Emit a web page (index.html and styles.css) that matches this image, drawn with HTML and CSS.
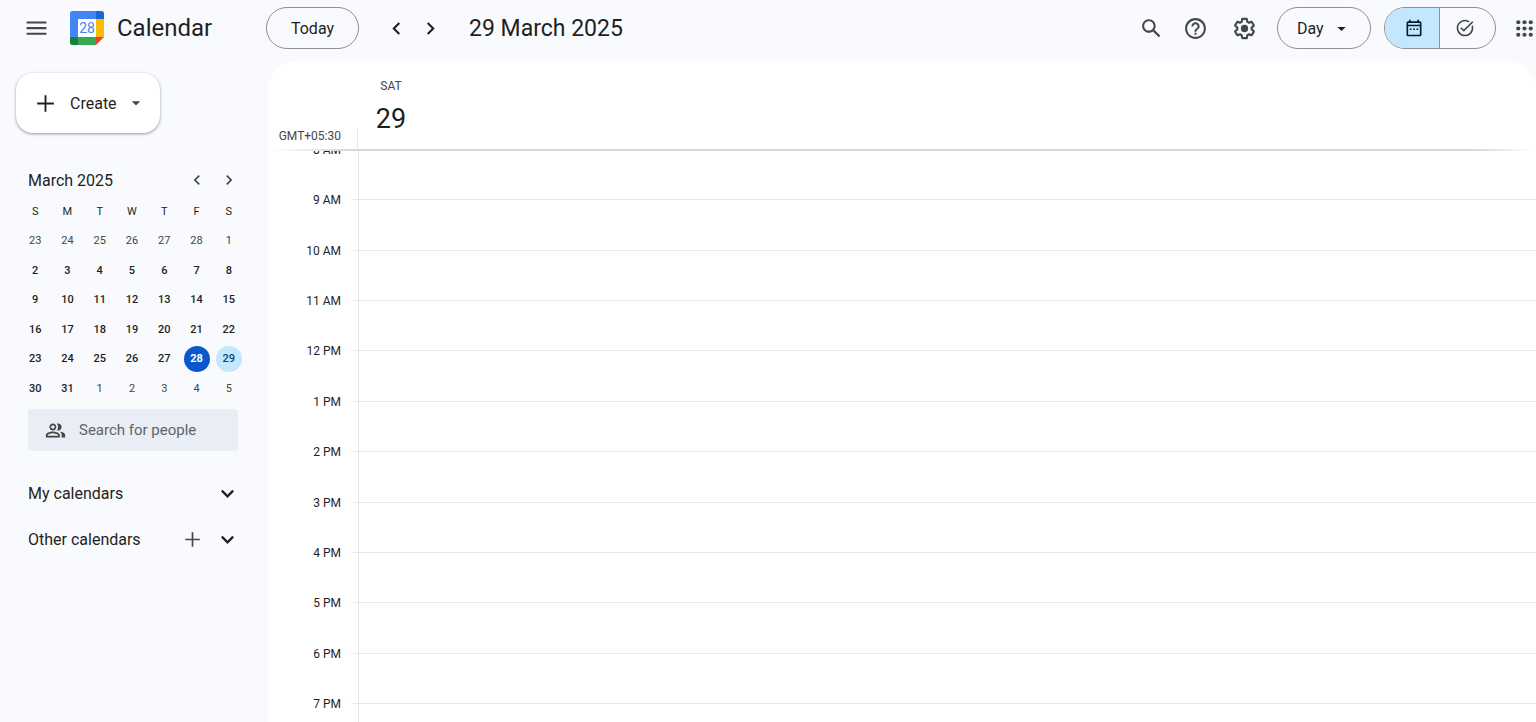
FILE: index.html
```html
<!DOCTYPE html>
<html lang="en-GB">
<head>
<meta charset="utf-8">
<meta name="viewport" content="width=device-width, initial-scale=1">
<title>Calendar - 29 March 2025</title>
<link rel="stylesheet" href="styles.css">
</head>
<body>
<div class="app">
  <header class="topbar">
    <div class="brand">
      <button class="icon-btn menu-btn" type="button" aria-label="Main menu">
        <svg class="icon" viewBox="0 0 24 24"><path d="M2.500 5.200h19v2h-19zM2.500 10.600h19v2h-19zM2.500 16h19v2h-19z"/></svg>
      </button>
      <svg class="logo" viewBox="0 0 34 34" aria-hidden="true">
        <path fill="#4285f4" d="M2.500 0H26v8H8v18H0V2.500A2.500 2.500 0 0 1 2.500 0z"/>
        <path fill="#fff" d="M8 8h18v18H8z"/>
        <path fill="#1967d2" d="M26 0h5.500A2.500 2.500 0 0 1 34 2.500V8h-8z"/>
        <path fill="#fbbc04" d="M26 8h8v18h-8z"/>
        <path fill="#34a853" d="M8 26h18v8H8z"/>
        <path fill="#188038" d="M0 26h8v8H2.500A2.500 2.500 0 0 1 0 31.500z"/>
        <path fill="#ea4335" d="M26 26h8l-8 8z"/>
        <text class="logo-day" x="17" y="22" text-anchor="middle">28</text>
      </svg>
      <span class="brand-name">Calendar</span>
    </div>
    <button class="pill today" type="button">Today</button>
    <div class="stepper">
      <button class="icon-btn" type="button" aria-label="Previous day">
        <svg class="icon" viewBox="0 0 24 24"><path d="M15.400 7.400 14 6l-6 6 6 6 1.400-1.400L10.800 12z"/></svg>
      </button>
      <button class="icon-btn" type="button" aria-label="Next day">
        <svg class="icon" viewBox="0 0 24 24"><path d="M10 6 8.600 7.400l4.600 4.600-4.600 4.600L10 18l6-6z"/></svg>
      </button>
    </div>
    <h1 class="date-title">29 March 2025</h1>
    <div class="tools">
      <button class="icon-btn search-btn" type="button" aria-label="Search">
        <svg class="icon" viewBox="0 0 24 24"><path d="M20.490 19l-5.730-5.730C15.530 12.200 16 10.910 16 9.500 16 5.910 13.090 3 9.500 3S3 5.910 3 9.500 5.910 16 9.500 16c1.410 0 2.700-.47 3.770-1.240L19 20.490 20.490 19zM5 9.500C5 7.010 7.010 5 9.500 5S14 7.010 14 9.500 11.990 14 9.500 14 5 11.990 5 9.500z"/></svg>
      </button>
      <button class="icon-btn help-btn" type="button" aria-label="Support">
        <svg class="icon" viewBox="0 0 24 24"><path d="M11 18h2v-2h-2v2zm1-16C6.480 2 2 6.480 2 12s4.480 10 10 10 10-4.480 10-10S17.520 2 12 2zm0 18c-4.410 0-8-3.590-8-8s3.590-8 8-8 8 3.590 8 8-3.590 8-8 8zm0-14c-2.210 0-4 1.790-4 4h2c0-1.100.9-2 2-2s2 .9 2 2c0 2-3 1.750-3 5h2c0-2.250 3-2.500 3-5 0-2.210-1.790-4-4-4z"/></svg>
      </button>
      <button class="icon-btn" type="button" aria-label="Settings">
        <svg class="icon" viewBox="0 0 24 24"><path d="M13.850 22.250h-3.700c-.74 0-1.360-.54-1.450-1.270l-.27-1.890c-.27-.14-.53-.29-.79-.46l-1.800.72c-.7.26-1.470-.03-1.810-.65L2.200 15.530c-.35-.66-.2-1.440.36-1.880l1.530-1.190c-.01-.15-.02-.3-.02-.46 0-.15.010-.31.020-.46l-1.520-1.190c-.59-.45-.74-1.260-.37-1.880l1.850-3.190c.34-.62 1.110-.9 1.790-.63l1.810.73c.26-.17.52-.32.780-.46l.27-1.910c.09-.7.710-1.250 1.440-1.250h3.700c.74 0 1.360.54 1.450 1.270l.27 1.890c.27.14.53.29.79.46l1.800-.72c.71-.26 1.480.03 1.820.65l1.840 3.180c.36.66.2 1.440-.36 1.880l-1.520 1.190c.01.15.020.3.020.46s-.01.31-.02.46l1.520 1.190c.56.45.72 1.230.37 1.860l-1.860 3.220c-.34.62-1.110.9-1.800.63l-1.800-.72c-.26.17-.52.32-.78.46l-.27 1.910c-.1.680-.72 1.220-1.460 1.220zm-3.230-2h2.760l.37-2.550.53-.22c.44-.18.88-.44 1.340-.78l.45-.34 2.380.96 1.380-2.400-2.030-1.580.07-.56c.03-.26.06-.51.06-.78s-.03-.53-.06-.78l-.07-.56 2.030-1.580-1.390-2.400-2.390.96-.45-.35c-.42-.32-.87-.58-1.330-.77l-.52-.22-.37-2.550h-2.760l-.37 2.550-.53.210c-.44.19-.88.440-1.340.79l-.45.33-2.380-.95-1.390 2.390 2.030 1.580-.07.56a7 7 0 0 0-.06.79c0 .26.020.53.060.78l.07.56-2.030 1.580 1.380 2.400 2.390-.96.45.35c.43.33.86.58 1.330.77l.53.22.38 2.550z"/><circle cx="12" cy="12" r="3.500"/></svg>
      </button>
      <label class="pill view-picker">
        <select class="view-select" aria-label="View">
          <option>Day</option><option>Week</option><option>Month</option><option>Year</option>
        </select>
        <svg class="icon view-caret" viewBox="0 0 24 24"><path d="m8 10.500 4 4 4-4z"/></svg>
      </label>
      <div class="pill switcher">
        <button class="switch active" type="button" aria-label="Calendar" aria-pressed="true">
          <svg class="icon-sm" viewBox="0 0 24 24"><path d="M19 4h-1V2h-2v2H8V2H6v2H5a2 2 0 0 0-2 2v14c0 1.100.9 2 2 2h14a2 2 0 0 0 2-2V6a2 2 0 0 0-2-2zm0 16H5V10h14v10zm0-12H5V6h14v2z"/><path d="M7 12.500h2v2H7zM11 12.500h2v2h-2zM15 12.500h2v2h-2z"/></svg>
        </button>
        <button class="switch" type="button" aria-label="Tasks" aria-pressed="false">
          <svg class="icon-sm" viewBox="0 0 24 24"><path d="M22 5.180 10.590 16.600l-4.240-4.240 1.410-1.410 2.830 2.830 10-10L22 5.180zM19.790 10.220c.13.570.21 1.170.21 1.780 0 4.420-3.580 8-8 8s-8-3.580-8-8 3.580-8 8-8c1.580 0 3.040.46 4.280 1.250l1.440-1.440A9.900 9.900 0 0 0 12 2C6.480 2 2 6.480 2 12s4.480 10 10 10 10-4.480 10-10c0-1.190-.22-2.330-.6-3.390l-1.610 1.610z"/></svg>
        </button>
      </div>
      <button class="icon-btn apps-btn" type="button" aria-label="Apps">
        <svg class="icon" viewBox="0 0 24 24"><circle cx="6" cy="6" r="2"/><circle cx="12" cy="6" r="2"/><circle cx="18" cy="6" r="2"/><circle cx="6" cy="12" r="2"/><circle cx="12" cy="12" r="2"/><circle cx="18" cy="12" r="2"/><circle cx="6" cy="18" r="2"/><circle cx="12" cy="18" r="2"/><circle cx="18" cy="18" r="2"/></svg>
      </button>
    </div>
  </header>

  <aside class="sidebar">
    <button class="create" type="button">
      <svg class="icon" viewBox="0 0 24 24"><path d="M11.100 4h1.800v7.100H20v1.800h-7.100V20h-1.800v-7.100H4v-1.800h7.100z"/></svg>
      <span>Create</span>
      <svg class="icon-sm create-caret" viewBox="0 0 24 24"><path d="m7 10 5 5 5-5z"/></svg>
    </button>

    <section class="mini">
      <div class="mini-head">
        <h2 class="side-title">March 2025</h2>
        <button class="mini-btn" type="button" aria-label="Previous month">
          <svg class="icon-sm" viewBox="0 0 24 24"><path d="M15.400 7.400 14 6l-6 6 6 6 1.400-1.400L10.800 12z"/></svg>
        </button>
        <button class="mini-btn" type="button" aria-label="Next month">
          <svg class="icon-sm" viewBox="0 0 24 24"><path d="M10 6 8.600 7.400l4.600 4.600-4.600 4.600L10 18l6-6z"/></svg>
        </button>
      </div>
      <table class="month">
        <thead>
          <tr><th>S</th><th>M</th><th>T</th><th>W</th><th>T</th><th>F</th><th>S</th></tr>
        </thead>
        <tbody>
          <tr class="outside"><td><button>23</button></td><td><button>24</button></td><td><button>25</button></td><td><button>26</button></td><td><button>27</button></td><td><button>28</button></td><td><button>1</button></td></tr>
          <tr><td><button>2</button></td><td><button>3</button></td><td><button>4</button></td><td><button>5</button></td><td><button>6</button></td><td><button>7</button></td><td><button>8</button></td></tr>
          <tr><td><button>9</button></td><td><button>10</button></td><td><button>11</button></td><td><button>12</button></td><td><button>13</button></td><td><button>14</button></td><td><button>15</button></td></tr>
          <tr><td><button>16</button></td><td><button>17</button></td><td><button>18</button></td><td><button>19</button></td><td><button>20</button></td><td><button>21</button></td><td><button>22</button></td></tr>
          <tr><td><button>23</button></td><td><button>24</button></td><td><button>25</button></td><td><button>26</button></td><td><button>27</button></td><td><button class="is-today">28</button></td><td><button class="is-selected">29</button></td></tr>
          <tr><td><button>30</button></td><td><button>31</button></td><td class="outside"><button>1</button></td><td class="outside"><button>2</button></td><td class="outside"><button>3</button></td><td class="outside"><button>4</button></td><td class="outside"><button>5</button></td></tr>
        </tbody>
      </table>
    </section>

    <label class="people">
      <svg class="icon-people" viewBox="0 0 24 24"><path d="M9 12c2.210 0 4-1.790 4-4s-1.790-4-4-4-4 1.790-4 4 1.790 4 4 4zm0-6c1.100 0 2 .9 2 2s-.9 2-2 2-2-.9-2-2 .9-2 2-2zM9 13c-2.670 0-8 1.340-8 4v3h16v-3c0-2.660-5.330-4-8-4zm6 5H3v-.99C3.200 16.290 6.300 15 9 15s5.800 1.290 6 2v1zM15 12c2.210 0 4-1.790 4-4s-1.790-4-4-4c-.47 0-.91.100-1.330.24A5.980 5.980 0 0 1 15 8c0 1.430-.5 2.740-1.330 3.760.42.140.86.240 1.330.24zM16.670 13.130C18.040 14.060 19 15.320 19 17v3h4v-3c0-2.180-3.580-3.470-6.330-3.870z"/></svg>
      <input class="people-input" type="text" placeholder="Search for people" aria-label="Search for people">
    </label>

    <div class="list-head">
      <h2 class="side-title">My calendars</h2>
      <button class="mini-btn" type="button" aria-label="Expand my calendars">
        <svg class="icon" viewBox="0 0 24 24"><path d="M12 16.300 5.800 10.100l1.600-1.600 4.600 4.600 4.600-4.600 1.600 1.600z"/></svg>
      </button>
    </div>
    <div class="list-head">
      <h2 class="side-title">Other calendars</h2>
      <button class="mini-btn add-btn" type="button" aria-label="Add other calendars">
        <svg class="icon" viewBox="0 0 24 24"><path d="M11.200 5h1.600v6.200H19v1.600h-6.200V19h-1.600v-6.200H5v-1.600h6.200z"/></svg>
      </button>
      <button class="mini-btn" type="button" aria-label="Expand other calendars">
        <svg class="icon" viewBox="0 0 24 24"><path d="M12 16.300 5.800 10.100l1.600-1.600 4.600 4.600 4.600-4.600 1.600 1.600z"/></svg>
      </button>
    </div>
  </aside>

  <main class="day-view">
    <div class="day-head">
      <span class="zone">GMT+05:30</span>
      <span class="zone-rule"></span>
      <div class="day-name">
        <span class="weekday">SAT</span>
        <span class="day-number">29</span>
      </div>
    </div>
    <ol class="hours">
      <li class="hour"><span class="time">8 AM</span><span class="slot"></span></li>
      <li class="hour"><span class="time">9 AM</span><span class="slot"></span></li>
      <li class="hour"><span class="time">10 AM</span><span class="slot"></span></li>
      <li class="hour"><span class="time">11 AM</span><span class="slot"></span></li>
      <li class="hour"><span class="time">12 PM</span><span class="slot"></span></li>
      <li class="hour"><span class="time">1 PM</span><span class="slot"></span></li>
      <li class="hour"><span class="time">2 PM</span><span class="slot"></span></li>
      <li class="hour"><span class="time">3 PM</span><span class="slot"></span></li>
      <li class="hour"><span class="time">4 PM</span><span class="slot"></span></li>
      <li class="hour"><span class="time">5 PM</span><span class="slot"></span></li>
      <li class="hour"><span class="time">6 PM</span><span class="slot"></span></li>
      <li class="hour"><span class="time">7 PM</span><span class="slot"></span></li>
    </ol>
  </main>
</div>
</body>
</html>
```
FILE: styles.css
```css
* {
  box-sizing: border-box;
}

body {
  margin: 0;
  background: #f8fafd;
  color: #1f1f1f;
  font-family: Roboto, "Liberation Sans", sans-serif;
  font-size: 16px;
  overflow: hidden;
}

h1,
h2 {
  margin: 0;
  font-weight: 400;
}

button {
  margin: 0;
  padding: 0;
  border: 0;
  background: none;
  color: inherit;
  font: inherit;
  cursor: pointer;
}

svg {
  display: block;
  flex: none;
  fill: currentColor;
}

.icon {
  width: 25px;
  height: 25px;
}

.icon-sm {
  width: 20px;
  height: 20px;
}

.app {
  display: grid;
  grid-template-columns: 268px 1fr;
  grid-template-rows: auto 1fr;
  min-height: 100vh;
}

/* Top bar */

.topbar {
  grid-column: 1 / -1;
  display: flex;
  align-items: center;
  padding: 7px 0 12px;
}

.brand {
  display: flex;
  align-items: center;
  width: 266px;
  padding-left: 24px;
}

.icon-btn {
  display: grid;
  place-items: center;
  color: #444746;
}

.menu-btn {
  margin-right: 21px;
}

.logo {
  width: 34px;
  height: 34px;
  margin-right: 13px;
}

.logo-day {
  fill: #4285f4;
  font-size: 14px;
}

.brand-name {
  font-size: 24px;
}

.pill {
  height: 42px;
  border: 1px solid #8e918f;
  border-radius: 21px;
}

.today {
  width: 93px;
}

.stepper {
  display: flex;
  gap: 9px;
  margin: 0 26px 0 25px;
}

.stepper .icon-btn {
  color: #1f1f1f;
}

.date-title {
  font-size: 23px;
}

.tools {
  display: flex;
  align-items: center;
  margin-left: auto;
  margin-right: -1px;
}

.tools > .icon-btn {
  margin-right: 20px;
}

.tools > .search-btn {
  margin-right: 19px;
}

.tools > .help-btn {
  margin-right: 24px;
}

.view-picker {
  display: grid;
  align-items: center;
  width: 94px;
  margin-right: 13px;
}

.view-select {
  grid-area: 1 / 1;
  width: 100%;
  height: 40px;
  padding: 0 0 0 19px;
  appearance: none;
  border: 0;
  border-radius: 20px;
  background: none;
  color: inherit;
  font: inherit;
}

.view-caret {
  grid-area: 1 / 1;
  justify-self: end;
  margin-right: 16px;
  pointer-events: none;
}

.switcher {
  display: flex;
  width: 112px;
  margin-right: 16px;
  overflow: hidden;
}

.switch {
  flex: 1;
  display: grid;
  place-items: center;
  padding-right: 5px;
  color: #444746;
}

.switch.active {
  padding: 0 0 0 4px;
  border-right: 1px solid #8e918f;
  background: #c2e7ff;
  color: #001d35;
}

.tools > .apps-btn {
  margin-right: 0;
}

/* Sidebar */

.sidebar {
  padding: 12px 30px 24px 16px;
}

.create {
  display: flex;
  align-items: center;
  width: 144px;
  height: 60px;
  padding-left: 17px;
  border-radius: 17px;
  background: #fff;
  box-shadow: 0 1px 2px rgba(60, 64, 67, 0.35), 0 1px 3px 1px rgba(60, 64, 67, 0.15);
}

.create span {
  margin: 0 9px 0 12px;
}

.create-caret {
  color: #444746;
}

.side-title {
  margin-right: auto;
  font-size: 16px;
}

.mini-head {
  display: flex;
  align-items: center;
  height: 32px;
  margin: 31px -3px 0 0;
  padding-left: 12px;
  gap: 7px;
}

.mini-btn {
  display: grid;
  place-items: center;
  width: 25px;
  height: 25px;
}

.mini-head .mini-btn {
  color: #444746;
}

.month {
  table-layout: fixed;
  width: 226px;
  height: 206px;
  margin: 1px 0 6px 3px;
  border-collapse: collapse;
  font-size: 11px;
  font-weight: 500;
}

.month th,
.month td {
  height: 29px;
  padding: 0;
  text-align: center;
  vertical-align: middle;
  font-weight: inherit;
}

.month th {
  font-weight: 400;
}

.month button {
  display: block;
  width: 26px;
  height: 26px;
  margin: 0 auto;
  border-radius: 50%;
}

.month .outside {
  color: #444746;
  font-weight: 400;
}

.month .is-today {
  background: #0b57d0;
  color: #fff;
  font-weight: 700;
}

.month .is-selected {
  background: #c2e7ff;
  color: #004a77;
}

.people {
  display: flex;
  align-items: center;
  height: 42px;
  margin: 0 0 19px 12px;
  padding-left: 17px;
  gap: 13px;
  border-radius: 4px;
  background: #e9eef6;
  color: #444746;
}

.icon-people {
  width: 21px;
  height: 21px;
}

.people-input {
  flex: 1;
  min-width: 0;
  padding: 0;
  border: 0;
  outline: 0;
  background: none;
  color: inherit;
  font: inherit;
  font-size: 15px;
}

.people-input::placeholder {
  color: #5f6368;
  opacity: 1;
}

.list-head {
  display: flex;
  align-items: center;
  height: 46px;
  padding-left: 12px;
}

.list-head .mini-btn {
  margin-right: -2px;
}

.list-head .add-btn {
  margin-right: 10px;
  color: #444746;
}

/* Day view */

.day-view {
  display: flex;
  flex-direction: column;
  border-radius: 29px 29px 0 0;
  background: #fff;
  overflow: hidden;
}

.day-head {
  position: relative;
  display: flex;
  align-items: flex-end;
  height: 90px;
  background: #fff;
}

.day-head::after {
  content: "";
  position: absolute;
  left: 0;
  right: 0;
  bottom: 0;
  height: 2px;
  background: linear-gradient(90deg, transparent, #d6d7d9 80px, #d6d7d9 calc(100% - 64px), transparent);
}

.zone {
  width: 73px;
  padding-bottom: 7px;
  text-align: right;
  font-size: 12px;
  line-height: 16px;
  color: #444746;
}

.zone-rule {
  width: 1px;
  height: 23px;
  margin-left: 16px;
  background: #e3e6ec;
}

.day-name {
  display: flex;
  flex-direction: column;
  align-items: center;
  width: 66px;
  padding-bottom: 15px;
}

.weekday {
  font-size: 12px;
  line-height: 16px;
  color: #444746;
}

.day-number {
  font-size: 27px;
  line-height: 34px;
  margin-top: 8px;
}

.hours {
  flex: 1;
  display: grid;
  grid-template-rows: repeat(11, minmax(48px, 1fr)) 19px;
  margin: -2px 0 0;
  padding: 0;
  list-style: none;
}

.hour {
  display: flex;
  min-height: 0;
}

.time {
  width: 73px;
  height: 16px;
  margin: -7px 10px 0 0;
  text-align: right;
  font-size: 12px;
  line-height: 16px;
  color: #1f1f1f;
}

.slot {
  flex: 1;
  border-top: 1px solid #e6e9ef;
  background: linear-gradient(#e1e4ea, #e1e4ea) 7px 0 / 1px 100% no-repeat;
}
```
